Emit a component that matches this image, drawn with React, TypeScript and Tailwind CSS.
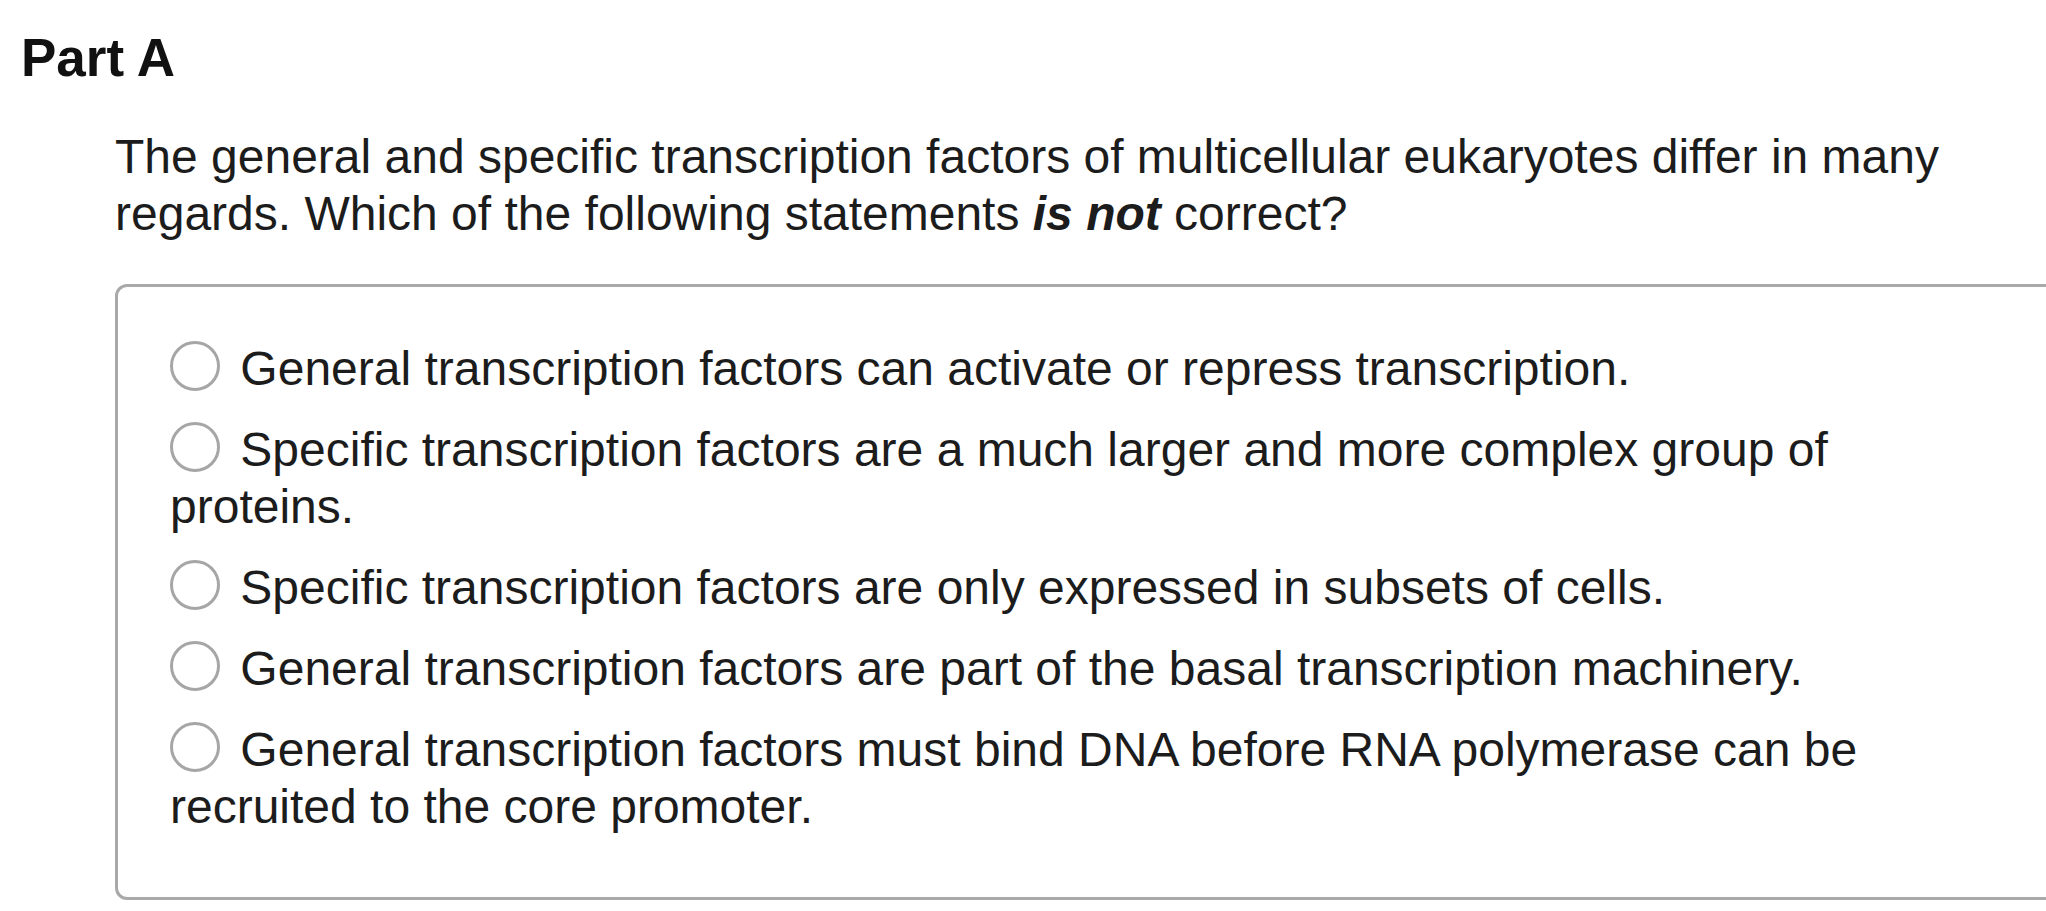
import React from "react";

const options: string[] = [
  "General transcription factors can activate or repress transcription.",
  "Specific transcription factors are a much larger and more complex group of proteins.",
  "Specific transcription factors are only expressed in subsets of cells.",
  "General transcription factors are part of the basal transcription machinery.",
  "General transcription factors must bind DNA before RNA polymerase can be recruited to the core promoter.",
];

export default function App() {
  return (
    <div
      className="w-[2046px] h-[911px] overflow-hidden bg-white text-[#1c1c1c]"
      style={{ fontFamily: '"Liberation Sans", Arial, Helvetica, sans-serif' }}
    >
      <div className="pt-[27px] pl-[21px]">
        <h2 className="text-[53px] leading-[62px] font-bold text-[#111]">Part A</h2>
      </div>
      <div className="pl-[115px] mt-[39px]">
        <p className="text-[48px] leading-[57px] pr-[20px]">
          The general and specific transcription factors of multicellular eukaryotes differ in many
          regards. Which of the following statements <b className="italic font-bold">is not</b> correct?
        </p>
        <div className="mt-[42px] w-[1960px] border-[3px] border-[#a9a9a9] rounded-[12px] pt-[53px] pb-[36px] pl-[52px] pr-[80px]">
          {options.map((o, i) => (
            <div key={i} className="text-[48px] leading-[57px] mb-[24px] last:mb-[26px]">
              <span className="inline-block w-[50px] h-[50px] rounded-full border-[3px] border-[#a6a6a6] bg-white align-[-6px] mr-[7px]" />{" "}
              {o}
            </div>
          ))}
        </div>
      </div>
    </div>
  );
}
